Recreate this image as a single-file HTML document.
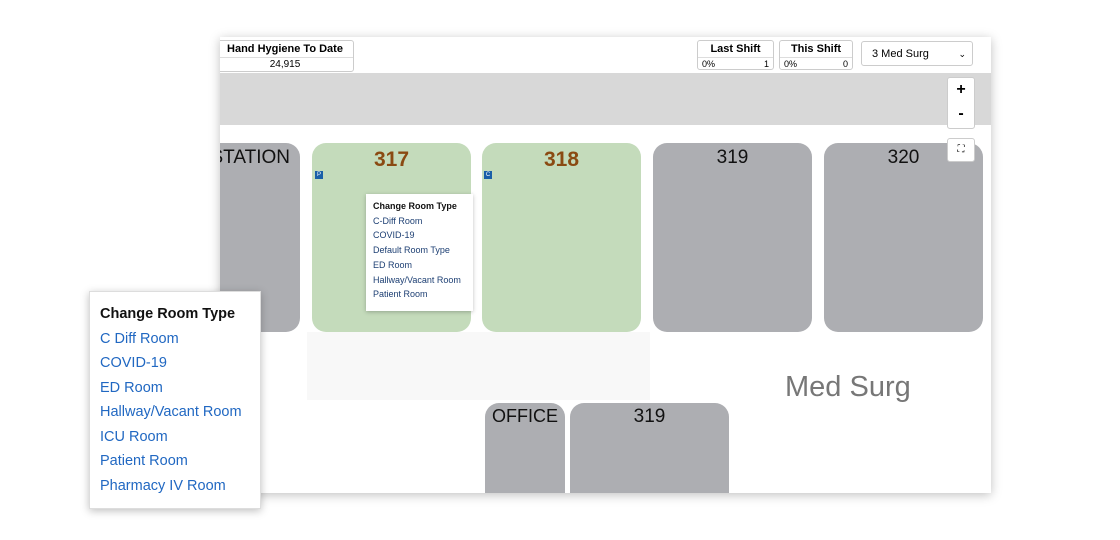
<!DOCTYPE html>
<html><head><style>
body{margin:0;width:1120px;height:540px;background:#fff;position:relative;overflow:hidden;font-family:"Liberation Sans",sans-serif}
.a{position:absolute}
.panel{left:220px;top:37px;width:771px;height:456px;background:#fff;box-shadow:0 2px 10px rgba(0,0,0,.25);overflow:hidden}
.room{position:absolute;border-radius:14px;text-align:center;font-size:19px;color:#111}
.g{background:#adaeb2}.gr{background:#c4dbbb}
.num{color:#8a4a12;font-weight:bold;font-size:21px}
.box{position:absolute;border:1px solid #ccc;border-radius:3px;font-size:11px;background:#fff;z-index:3}
.box b{display:block;text-align:center;border-bottom:1px solid #ddd;padding:2px 0}
.ic{position:absolute;width:8px;height:8px;background:#1a5fa8;color:#fff;font-size:6px;line-height:8px;text-align:center}
.pop{position:absolute;background:#fff;box-shadow:0 1px 4px rgba(0,0,0,.25)}
</style></head><body>
<div class="a panel">
 <div class="box" style="left:-4px;top:3px;width:136px;height:30px"><b style="font-size:11px">Hand Hygiene To Date</b><div style="text-align:center;font-size:10px;padding-top:1px">24,915</div></div>
 <div class="box" style="left:477px;top:3px;width:75px;height:28px"><b>Last Shift</b><div style="font-size:9px;padding:1px 4px;display:flex;justify-content:space-between"><span>0%</span><span>1</span></div></div>
 <div class="box" style="left:559px;top:3px;width:72px;height:28px"><b>This Shift</b><div style="font-size:9px;padding:1px 4px;display:flex;justify-content:space-between"><span>0%</span><span>0</span></div></div>
 <div class="box" style="left:641px;top:4px;width:112px;height:25px;line-height:25px;font-size:11px;padding-left:10px;box-sizing:border-box">3 Med Surg<span style="position:absolute;right:6px;font-size:9px">&#8964;</span></div>
 <div class="a" style="left:0;top:36px;width:771px;height:52px;background:#d8d8d8"></div>
 <div class="box" style="left:727px;top:40px;width:26px;height:50px;font-weight:bold;font-size:16px;text-align:center;line-height:24px">+<br>-</div>
 <div class="box" style="left:727px;top:101px;width:26px;height:22px;text-align:center;font-size:10px;line-height:22px">&#x26F6;</div>
 <div class="a" style="left:87px;top:295px;width:343px;height:68px;background:#f8f8f8"></div>
 <div class="room g" style="left:-30px;top:106px;width:110px;height:189px"><div style="position:absolute;right:10px;top:4px">STATION</div></div>
 <div class="room gr" style="left:92px;top:106px;width:159px;height:189px"><div class="num" style="padding-top:5px">317</div><div class="ic" style="left:3px;top:28px">P</div></div>
 <div class="room gr" style="left:262px;top:106px;width:159px;height:189px"><div class="num" style="padding-top:5px">318</div><div class="ic" style="left:2px;top:28px">C</div></div>
 <div class="room g" style="left:433px;top:106px;width:159px;height:189px;padding-top:4px;box-sizing:border-box">319</div>
 <div class="room g" style="left:604px;top:106px;width:159px;height:189px;padding-top:4px;box-sizing:border-box">320</div>
 <div class="room g" style="left:265px;top:366px;width:80px;height:110px;padding-top:3px;box-sizing:border-box;font-size:18px">OFFICE</div>
 <div class="room g" style="left:350px;top:366px;width:159px;height:110px;padding-top:3px;box-sizing:border-box">319</div>
 <div class="a" style="left:565px;top:334px;font-size:29px;color:#777">Med Surg</div>
 <div class="pop" style="left:146px;top:157px;width:107px;height:117px;font-size:9px;line-height:14.7px;padding:5px 7px;box-sizing:border-box;color:#1d3f73">
  <div style="font-weight:bold;color:#111">Change Room Type</div>C-Diff Room<br>COVID-19<br>Default Room Type<br>ED Room<br>Hallway/Vacant Room<br>Patient Room</div>
</div>
<div class="pop" style="left:89px;top:291px;width:172px;height:218px;padding:10px 10px;box-sizing:border-box;font-size:14.5px;line-height:24.5px;color:#2168c2;border:1px solid #ddd;box-shadow:0 2px 8px rgba(0,0,0,.25)">
 <div style="font-weight:bold;color:#111">Change Room Type</div>C Diff Room<br>COVID-19<br>ED Room<br>Hallway/Vacant Room<br>ICU Room<br>Patient Room<br>Pharmacy IV Room</div>
</body></html>
